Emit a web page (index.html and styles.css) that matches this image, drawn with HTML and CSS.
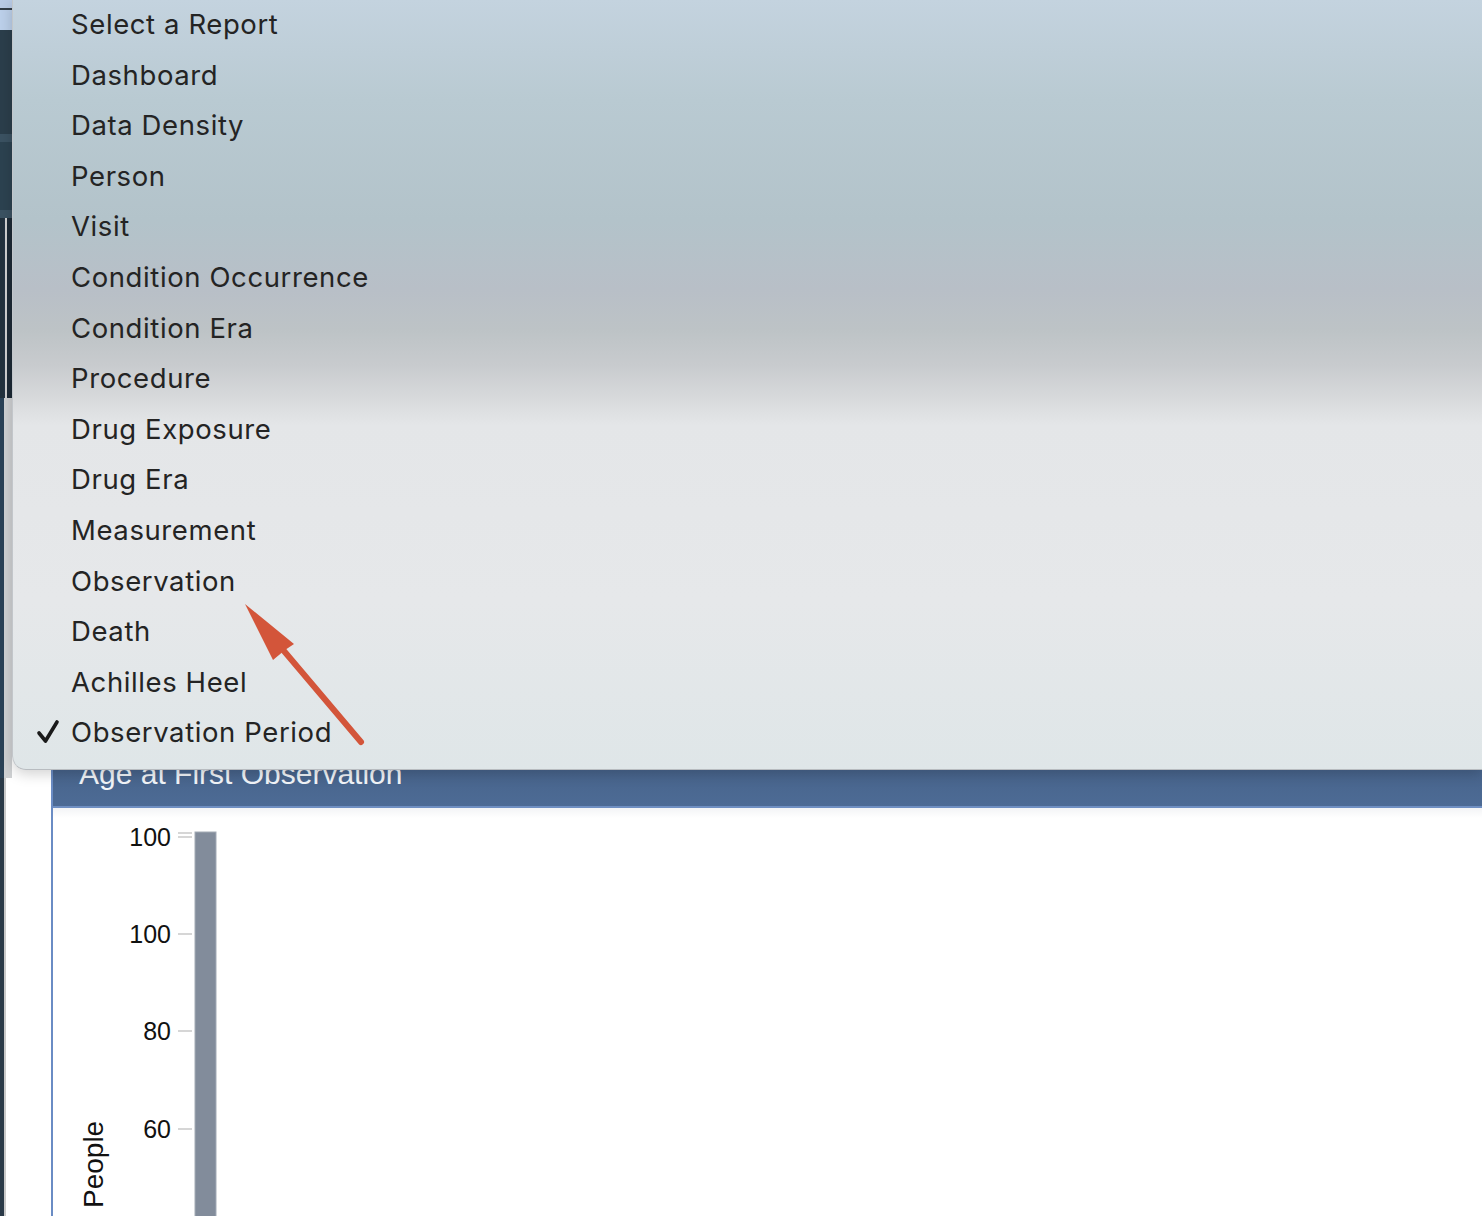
FILE: index.html
```html
<!DOCTYPE html>
<html lang="en">
<head>
    <meta charset="UTF-8">
    <meta name="viewport" content="width=device-width, initial-scale=1.0">
    <title>Observation Period</title>
    <link rel="stylesheet" href="styles.css">
</head>
<body>
    <div class="sidebar">
        <div class="sb-top"></div>
        <div class="sb-dark"></div>
        <div class="sb-band"></div>
        <div class="sb-dark2"></div>
        <div class="sb-band"></div>
        <div class="sb-scroll"></div>
        <div class="sb-grey"></div>
        <div class="sb-rest"></div>
    </div>

    <div class="main">
        <div class="card">
            <div class="card-head">Age at First Observation</div>
            <div class="card-body">
                <svg class="chart" width="1429" height="408" viewBox="0 0 1429 408">
                    <text class="y-title" transform="translate(50,400) rotate(-90)">People</text>
                    <g class="ticks">
                        <line x1="125" y1="25" x2="139" y2="25"></line>
                        <line x1="125" y1="29" x2="139" y2="29"></line>
                        <line x1="125" y1="126" x2="139" y2="126"></line>
                        <line x1="125" y1="223" x2="139" y2="223"></line>
                        <line x1="125" y1="321" x2="139" y2="321"></line>
                    </g>
                    <g class="labels">
                        <text x="118" y="38">100</text>
                        <text x="118" y="135">100</text>
                        <text x="118" y="232">80</text>
                        <text x="118" y="330">60</text>
                    </g>
                    <rect class="bar" x="142" y="24" width="21" height="400"></rect>
                </svg>
            </div>
        </div>
    </div>

    <div class="menu">
        <ul>
            <li>Select a Report</li>
            <li>Dashboard</li>
            <li>Data Density</li>
            <li>Person</li>
            <li>Visit</li>
            <li>Condition Occurrence</li>
            <li>Condition Era</li>
            <li>Procedure</li>
            <li>Drug Exposure</li>
            <li>Drug Era</li>
            <li>Measurement</li>
            <li>Observation</li>
            <li>Death</li>
            <li>Achilles Heel</li>
            <li class="checked">
                <svg class="check" width="24" height="26" viewBox="0 0 24 26"><path d="M3 14 L9.5 22 L21 3"></path></svg>
                Observation Period
            </li>
        </ul>
    </div>

    <svg class="arrow" width="1482" height="1216" viewBox="0 0 1482 1216">
        <line x1="284" y1="651" x2="361" y2="742"></line>
        <path d="M245 604 L294 644 L285 650 L273 660 Z"></path>
    </svg>
</body>
</html>
```

FILE: styles.css
```css
* {
    padding: 0;
    margin: 0;
    box-sizing: border-box;
}
html, body {
    width: 1482px;
    height: 1216px;
    overflow: hidden;
}
body {
    position: relative;
    display: flex;
    background: #fff;
    font-family: "Liberation Sans", Arial, sans-serif;
}

/* left edge of the app behind the menu */
.sidebar {
    width: 12px;
    display: flex;
    flex-direction: column;
    flex-shrink: 0;
}
.sb-top {
    height: 10px;
    background: #b9cbe6;
    border-bottom: 2px solid #333d48;
}
.sb-dark {
    height: 124px;
    background: #2b3e4b;
    border-top: 20px solid #bcd0ea;
}
.sb-band {
    height: 8px;
    background: #3b5262;
}
.sb-dark2 {
    height: 68px;
    background: #2c4250;
}
.sb-scroll {
    height: 180px;
    background: #243444;
    border-left: 4px solid #22313d;
    box-shadow: inset -5px 0 0 #1d2a36, inset -7px 0 0 #d0d0d0;
}
.sb-grey {
    height: 380px;
    background: #cfd1d3;
    border-left: 4px solid #2a4257;
}
.sb-rest {
    flex: 1;
    width: 6px;
    background: #2a3a48;
    border-right: 2px solid #c9c9c9;
}

.main {
    flex: 1;
    padding-left: 39px;
    background: #fff;
}
.card {
    margin-top: 730px;
    border-left: 2px solid #6a8cc4;
}
.card-head {
    height: 78px;
    padding: 27px 0 0 26px;
    font-size: 30px;
    color: #f2f5f9;
    background: linear-gradient(#425d82, #4d6b95);
    border-bottom: 2px solid #6f8fc2;
}
.card-body {
    height: 408px;
    background: linear-gradient(#f3f4f6, #fff 10px);
}
.chart {
    display: block;
}
.chart text {
    font-family: "Liberation Sans", Arial, sans-serif;
    fill: #111;
}
.labels text {
    font-size: 25px;
    text-anchor: end;
}
.y-title {
    font-size: 28px;
}
.ticks line {
    stroke: #d6d6d6;
    stroke-width: 2;
}
.bar {
    fill: #828c9b;
    stroke: #a3abb6;
    stroke-width: 1;
}

/* popup menu */
.menu {
    position: absolute;
    top: 0;
    left: 12px;
    right: 0;
    height: 770px;
    border-bottom-left-radius: 14px;
    background: linear-gradient(#c4d3df 0, #b9cad2 100px, #b3c3ca 220px, #b8bfc7 290px, #bdc3c6 330px, #c8cbce 365px, #d6d8da 395px, #e4e6e8 425px, #e6e8ea 600px, #dfe6e8 770px);
    border-left: 1px solid #c2c6ca;
    border-bottom: 1px solid #b8bcc0;
    box-shadow: 0 4px 14px rgba(0, 0, 0, 0.18);
}
.menu ul {
    list-style: none;
    margin-top: -1px;
}
.menu li {
    position: relative;
    height: 50.6px;
    line-height: 50.6px;
    padding-left: 58px;
    font-family: Inter, "Noto Sans", sans-serif;
    font-size: 27.5px;
    letter-spacing: 0.6px;
    color: #242424;
}
.check {
    position: absolute;
    left: 23px;
    top: 12px;
}
.check path {
    fill: none;
    stroke: #1a1a1a;
    stroke-width: 3.6;
    stroke-linecap: round;
    stroke-linejoin: round;
}

.arrow {
    position: absolute;
    top: 0;
    left: 0;
    pointer-events: none;
}
.arrow line {
    stroke: #d3553a;
    stroke-width: 6;
    stroke-linecap: round;
}
.arrow path {
    fill: #d3553a;
}
```
